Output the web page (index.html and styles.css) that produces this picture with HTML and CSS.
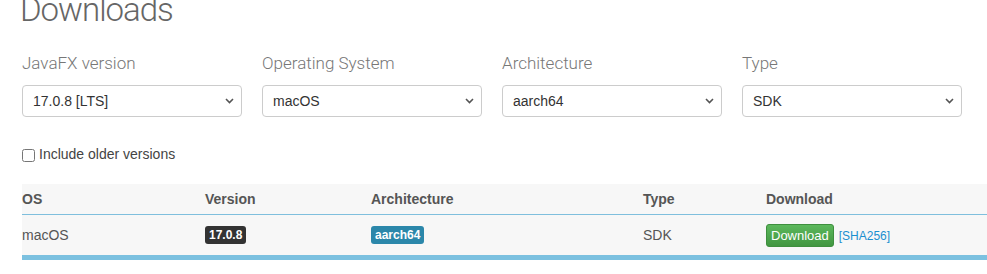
FILE: index.html
```html
<!DOCTYPE html>
<html lang="en">

<head>
  <meta charset="UTF-8">
  <meta name="viewport" content="width=device-width, initial-scale=1.0">
  <title>Downloads</title>
  <link rel="stylesheet" href="styles.css">
</head>

<body>

  <div class="page">
    <h1 class="title">Downloads</h1>

    <!-- Filters -->
    <div class="filters">
      <div class="filter">
        <label class="filter-label">JavaFX version</label>
        <div class="select-wrap">
          <select class="filter-select">
            <option>17.0.8 [LTS]</option>
          </select>
          <svg class="chevron" width="9" height="6" viewBox="0 0 9 6"><path d="M1 1l3.5 3.5L8 1" fill="none" stroke="#555" stroke-width="1.6"/></svg>
        </div>
      </div>
      <div class="filter">
        <label class="filter-label">Operating System</label>
        <div class="select-wrap">
          <select class="filter-select">
            <option>macOS</option>
          </select>
          <svg class="chevron" width="9" height="6" viewBox="0 0 9 6"><path d="M1 1l3.5 3.5L8 1" fill="none" stroke="#555" stroke-width="1.6"/></svg>
        </div>
      </div>
      <div class="filter">
        <label class="filter-label">Architecture</label>
        <div class="select-wrap">
          <select class="filter-select">
            <option>aarch64</option>
          </select>
          <svg class="chevron" width="9" height="6" viewBox="0 0 9 6"><path d="M1 1l3.5 3.5L8 1" fill="none" stroke="#555" stroke-width="1.6"/></svg>
        </div>
      </div>
      <div class="filter">
        <label class="filter-label">Type</label>
        <div class="select-wrap">
          <select class="filter-select">
            <option>SDK</option>
          </select>
          <svg class="chevron" width="9" height="6" viewBox="0 0 9 6"><path d="M1 1l3.5 3.5L8 1" fill="none" stroke="#555" stroke-width="1.6"/></svg>
        </div>
      </div>
    </div>

    <label class="older">
      <input type="checkbox" class="older-check">
      <span>Include older versions</span>
    </label>

    <!-- Results -->
    <table class="downloads">
      <thead>
        <tr>
          <th class="col-os">OS</th>
          <th class="col-version">Version</th>
          <th class="col-arch">Architecture</th>
          <th class="col-type">Type</th>
          <th>Download</th>
        </tr>
      </thead>
      <tbody>
        <tr>
          <td>macOS</td>
          <td><span class="badge badge-dark">17.0.8</span></td>
          <td><span class="badge badge-info">aarch64</span></td>
          <td>SDK</td>
          <td>
            <button class="download-button">Download</button>
            <a href="#" class="sha-link">[SHA256]</a>
          </td>
        </tr>
      </tbody>
    </table>
  </div>

</body>

</html>
```

FILE: styles.css
```css
body {
  margin: 0;
  padding: 0;
  font-family: 'Liberation Sans', Arial, sans-serif;
  color: #555;
  background-color: #fff;
  overflow: hidden;
}

.page {
  padding-left: 22px;
}

.title {
  font-family: 'Roboto', 'Liberation Sans', sans-serif;
  font-weight: 300;
  font-size: 33px;
  letter-spacing: -1px;
  line-height: 40px;
  color: #666;
  margin: -10px 0 0 -2px;
}

.filters {
  display: flex;
  gap: 20px;
  margin-top: 22px;
}

.filter {
  width: 220px;
}

.filter-label {
  display: block;
  font-family: 'Roboto', 'Liberation Sans', sans-serif;
  font-weight: 300;
  font-size: 17px;
  line-height: 22px;
  color: #777;
  margin-bottom: 11px;
}

.select-wrap {
  position: relative;
}

.filter-select {
  appearance: none;
  -webkit-appearance: none;
  width: 220px;
  height: 32px;
  border: 1px solid #ccc;
  border-radius: 4px;
  background-color: #fff;
  font-family: 'Liberation Sans', Arial, sans-serif;
  font-size: 14px;
  color: #333;
  padding: 0 10px;
}

.chevron {
  position: absolute;
  right: 8px;
  top: 13px;
}

.older {
  display: flex;
  align-items: center;
  gap: 4px;
  margin-top: 29px;
  font-size: 14px;
  color: #444;
}

.older-check {
  margin: 3px 0 0 0;
  width: 13px;
  height: 13px;
}

.downloads {
  margin-top: 22px;
  width: 965px;
  border-collapse: collapse;
  background-color: #f7f7f7;
  font-size: 14px;
  text-align: left;
  border-bottom: 5px solid #7cc1e0;
}

.downloads th {
  font-weight: bold;
  color: #555;
  height: 30px;
  padding: 0;
  border-bottom: 1px solid #7fbfdd;
}

.downloads td {
  height: 40px;
  padding: 0;
  color: #555;
}

.col-os {
  width: 183px;
}

.col-version {
  width: 166px;
}

.col-arch {
  width: 272px;
}

.col-type {
  width: 123px;
}

.badge {
  display: inline-block;
  font-size: 12px;
  font-weight: bold;
  color: #fff;
  padding: 2px 4px;
  border-radius: 3px;
  line-height: 14px;
}

.badge-dark {
  background-color: #333;
}

.badge-info {
  background-color: #2b87aa;
}

.download-button {
  font-family: 'Liberation Sans', Arial, sans-serif;
  font-size: 13px;
  line-height: 17px;
  color: #fff;
  background: linear-gradient(#5cb85c, #419641);
  border: 1px solid #3e8f3e;
  border-radius: 3px;
  padding: 2px 4px;
  cursor: pointer;
}

.sha-link {
  font-size: 12px;
  color: #1a8fd0;
  text-decoration: none;
  margin-left: 1px;
}
```
